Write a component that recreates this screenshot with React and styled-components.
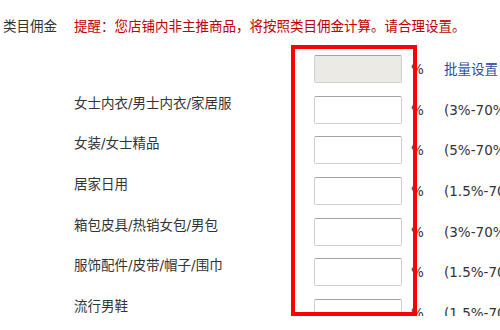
import React from "react";
import styled, { createGlobalStyle } from "styled-components";

const Global = createGlobalStyle`
  html, body { margin: 0; padding: 0; background: #fff; }
  body { font-family: "Noto Sans CJK SC", sans-serif; color: #333; overflow: hidden; }
`;

const Page = styled.div`
  position: relative;
  width: 500px;
  height: 316px;
  overflow: hidden;
  padding: 16px 0 0 3px;
  box-sizing: border-box;
  display: grid;
  grid-template-columns: 71px 1fr;
  grid-template-rows: 20px auto;
  row-gap: 19px;
  font-size: 13.5px;
  font-family: "DejaVu Sans", "Noto Sans CJK SC", sans-serif;
`;

const FieldLabel = styled.div`
  line-height: 20px;
  white-space: nowrap;
`;

const Hint = styled.div`
  line-height: 20px;
  color: #c00000;
  white-space: nowrap;
`;

const Rows = styled.div`
  grid-column: 2;
  display: flex;
  flex-direction: column;
  gap: 12.67px;
`;

const Row = styled.div`
  display: grid;
  grid-template-columns: 240px 88px 42px auto;
  height: 28px;
  white-space: nowrap;
`;

const CatLabel = styled.div`
  align-self: start;
  line-height: 14px;
`;

const Input = styled.input`
  box-sizing: border-box;
  width: 88px;
  height: 28px;
  margin: 0;
  border: 1px solid #cfcfcf;
  border-top-color: #a3a3a3;
  border-radius: 2px;
  background: ${(p) => (p.disabled ? "#ebeae4" : "#fff")};
  outline: none;
`;

const Pct = styled.span`
  align-self: center;
  padding-left: 9px;
  line-height: 20px;
`;

const Note = styled.span`
  align-self: center;
  line-height: 20px;
  color: ${(p) => (p.$link ? "#1f4f9f" : "#333")};
`;

const Highlight = styled.div`
  position: absolute;
  left: 291px;
  top: 45px;
  width: 126px;
  height: 271px;
  box-sizing: border-box;
  border: 4px solid #ff0000;
  pointer-events: none;
`;

const cats = [
  ["女士内衣/男士内衣/家居服", "(3%-70%)"],
  ["女装/女士精品", "(5%-70%)"],
  ["居家日用", "(1.5%-70%)"],
  ["箱包皮具/热销女包/男包", "(3%-70%)"],
  ["服饰配件/皮带/帽子/围巾", "(1.5%-70%)"],
  ["流行男鞋", "(1.5%-70%)"],
];

export default function App() {
  return (
    <>
      <Global />
      <Page>
        <FieldLabel>类目佣金</FieldLabel>
        <Hint>提醒：您店铺内非主推商品，将按照类目佣金计算。请合理设置。</Hint>
        <Rows>
          <Row>
            <CatLabel />
            <Input disabled />
            <Pct>%</Pct>
            <Note $link>批量设置</Note>
          </Row>
          {cats.map(([label, range]) => (
            <Row key={label}>
              <CatLabel>{label}</CatLabel>
              <Input />
              <Pct>%</Pct>
              <Note>{range}</Note>
            </Row>
          ))}
        </Rows>
        <Highlight />
      </Page>
    </>
  );
}
